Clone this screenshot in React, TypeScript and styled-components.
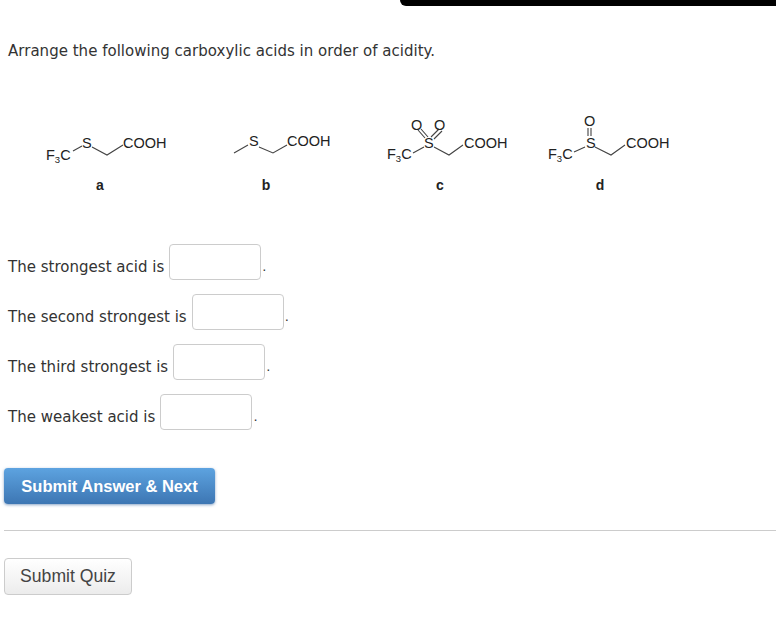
import React from 'react';
import styled, { createGlobalStyle } from 'styled-components';

const GlobalStyle = createGlobalStyle`
  html, body {
    margin: 0;
    padding: 0;
    background: #fff;
  }
`;

const Page = styled.div`
  width: 776px;
  height: 627px;
  overflow: hidden;
  font-family: 'DejaVu Sans', Verdana, sans-serif;
  color: #333;
`;

const TopBar = styled.div`
  height: 6px;
  margin-left: 400px;
  background: #000;
  border-bottom-left-radius: 8px;
`;

const Content = styled.div`
  padding: 36px 0 0 8px;
`;

const Prompt = styled.p`
  margin: 0;
  font-size: 15px;
  line-height: 18px;
  letter-spacing: 0.02px;
`;

const Figure = styled.svg`
  display: block;
  margin: 0 0 0 -8px;
`;

const Atom = styled.text`
  font-family: 'Liberation Sans', Arial, sans-serif;
  font-size: 14.5px;
  fill: #222;
`;

const Sub = styled.tspan`
  font-size: 9.5px;
`;

const Tag = styled.text`
  font-family: 'Liberation Sans', Arial, sans-serif;
  font-size: 14px;
  font-weight: 700;
  text-anchor: middle;
  fill: #222;
`;

const Bond = styled.path`
  fill: none;
  stroke: #444;
  stroke-width: 1.1;
`;

const Questions = styled.div`
  display: flex;
  flex-direction: column;
  gap: 14px;
`;

const QuestionRow = styled.label`
  display: flex;
  align-items: flex-end;
  height: 36px;
  font-size: 15px;
  line-height: 18px;
  letter-spacing: 0.015px;
`;

const QuestionText = styled.span`
  padding-bottom: 4px;
`;

const AnswerBox = styled.input`
  box-sizing: border-box;
  width: 92px;
  height: 36px;
  margin: 0 1px 0 5px;
  border: 1px solid #ccc;
  border-radius: 4px;
  background: #fff;
`;

const Period = styled.span`
  padding-bottom: 4px;
  font-size: 13px;
`;

const Actions = styled.div`
  margin-left: -4px;
`;

const PrimaryButton = styled.button`
  display: block;
  box-sizing: border-box;
  width: 211px;
  height: 36px;
  margin-top: 38px;
  padding: 0;
  border: none;
  border-radius: 4px;
  background: linear-gradient(#5da3e0, #3d76b3);
  box-shadow: 0 1px 3px rgba(40, 90, 150, 0.55);
  color: #fff;
  font-family: 'Liberation Sans', Arial, sans-serif;
  font-size: 16.5px;
  font-weight: 700;
`;

const Divider = styled.hr`
  height: 1px;
  margin: 26px 0 27px;
  border: none;
  background: #ccc;
`;

const SecondaryButton = styled.button`
  display: block;
  box-sizing: border-box;
  width: 128px;
  height: 37px;
  padding: 0;
  border: 1px solid #ccc;
  border-radius: 4px;
  background: linear-gradient(#fff, #ececec);
  color: #444;
  font-family: 'Liberation Sans', Arial, sans-serif;
  font-size: 17.6px;
`;

const questions = [
  'The strongest acid is',
  'The second strongest is',
  'The third strongest is',
  'The weakest acid is',
];

const AcidFigure = () => (
  <Figure width="776" height="184" viewBox="0 0 776 184">
    <g transform="translate(0 -60)">
      {/* a */}
      <Atom x="46" y="160">F<Sub dy="3">3</Sub><tspan dy="-3">C</tspan></Atom>
      <Bond d="M73 151L82 146M92 147L107 155L123 145" />
      <Atom x="82" y="148">S</Atom>
      <Atom x="123" y="148">COOH</Atom>
      <Tag x="100" y="190">a</Tag>

      {/* b */}
      <Bond d="M234 153L248 145M259 147L273 153L287 145" />
      <Atom x="249" y="146">S</Atom>
      <Atom x="287" y="146">COOH</Atom>
      <Tag x="266" y="190">b</Tag>

      {/* c */}
      <Atom x="387" y="159">F<Sub dy="3">3</Sub><tspan dy="-3">C</tspan></Atom>
      <Bond d="M413 153L424 147M434 147L449 155L463 145" />
      <Bond d="M418 130L425 138M421 129L428 137M439 129L431 137M442 131L434 139" />
      <Atom x="424" y="148">S</Atom>
      <Atom x="411" y="130">O</Atom>
      <Atom x="434" y="130">O</Atom>
      <Atom x="464" y="148">COOH</Atom>
      <Tag x="440" y="190">c</Tag>

      {/* d */}
      <Atom x="548" y="159">F<Sub dy="3">3</Sub><tspan dy="-3">C</tspan></Atom>
      <Bond d="M574 152L585 147M595 147L611 155L625 145" />
      <Bond d="M588 128V136M591 128V136" />
      <Atom x="586" y="148">S</Atom>
      <Atom x="584" y="126">O</Atom>
      <Atom x="626" y="148">COOH</Atom>
      <Tag x="600" y="190">d</Tag>
    </g>
  </Figure>
);

export default function App() {
  return (
    <Page>
      <GlobalStyle />
      <TopBar />
      <Content>
        <Prompt>Arrange the following carboxylic acids in order of acidity.</Prompt>
        <AcidFigure />
        <Questions>
          {questions.map((question) => (
            <QuestionRow key={question}>
              <QuestionText>{question}</QuestionText>
              <AnswerBox type="text" />
              <Period>.</Period>
            </QuestionRow>
          ))}
        </Questions>
        <Actions>
          <PrimaryButton>Submit Answer &amp; Next</PrimaryButton>
          <Divider />
          <SecondaryButton>Submit Quiz</SecondaryButton>
        </Actions>
      </Content>
    </Page>
  );
}
